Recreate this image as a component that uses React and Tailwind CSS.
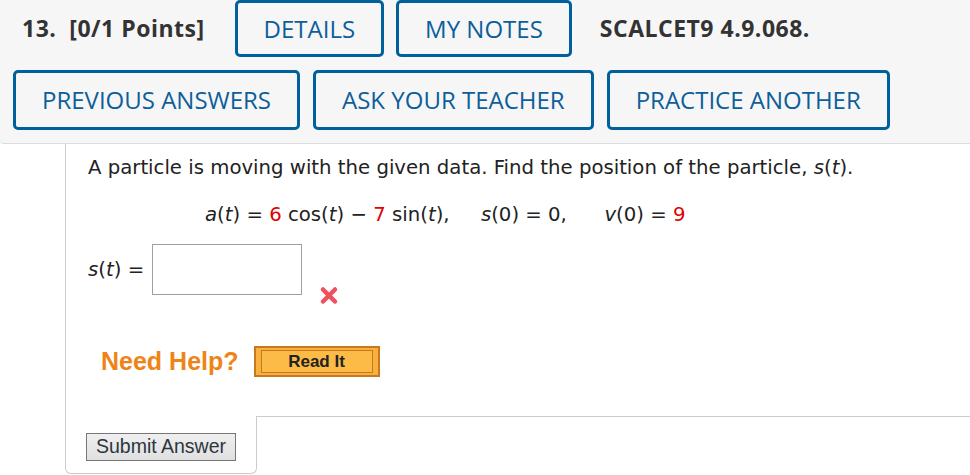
import React from "react";

function NavButton({ label, h }) {
  return (
    <button
      className={`${h} px-[26px] border-[3px] border-[#00609c] rounded-[5px] bg-[#f6f6f6] text-[#0d5e9a] text-[24px] leading-none whitespace-nowrap`}
    >
      {label}
    </button>
  );
}

function RedX() {
  return (
    <svg width="20" height="19" viewBox="0 0 20 19" className="self-end -mb-[10px] ml-[17px]">
      <path d="M4 3.5 L16 15.5 M16 3.5 L4 15.5" stroke="#f0505c" strokeWidth="4.5" strokeLinecap="round" />
    </svg>
  );
}

export default function App() {
  return (
    <div className="w-[970px] h-[475px] overflow-hidden bg-white">
      <div className="bg-[#f6f6f6] border-b border-[#dcdcdc] rounded-bl-[4px] pl-[13px] pb-[13px] font-['Open_Sans',sans-serif]">
        <div className="flex items-center h-[57px]">
          <span className="ml-[9px] mr-[30px] text-[23px] tracking-[0.5px] font-bold text-[#333] whitespace-pre">13.  [0/1 Points]</span>
          <div className="flex gap-[12px] self-stretch">
            <NavButton label="DETAILS" h="h-[57px]" />
            <NavButton label="MY NOTES" h="h-[57px]" />
          </div>
          <span className="ml-[28px] text-[23px] tracking-[0.5px] font-bold text-[#333]">SCALCET9 4.9.068.</span>
        </div>
        <div className="flex gap-[13px] mt-[13px]">
          <NavButton label="PREVIOUS ANSWERS" h="h-[60px]" />
          <NavButton label="ASK YOUR TEACHER" h="h-[60px]" />
          <NavButton label="PRACTICE ANOTHER" h="h-[60px]" />
        </div>
      </div>

      <div className="pl-[65px] font-['DejaVu_Sans',sans-serif] text-[#222]">
        <div className="border-l border-[#cccccc] pl-[22px] pt-[12px] pb-[35px]">
          <p className="text-[19.7px] leading-[24px]">
            A particle is moving with the given data. Find the position of the particle, <i>s</i>(<i>t</i>).
          </p>
          <p className="text-[19.7px] leading-[24px] mt-[23px] pl-[117px] whitespace-pre">
            <i>a</i>(<i>t</i>) = <span className="text-[#e00000]">6</span> cos(<i>t</i>) − <span className="text-[#e00000]">7</span> sin(<i>t</i>),     <i>s</i>(0) = 0,      <i>v</i>(0) = <span className="text-[#e00000]">9</span>
          </p>
          <div className="flex items-center mt-[17px]">
            <span className="text-[19.7px] leading-[24px] mr-[8px]"><i>s</i>(<i>t</i>) =</span>
            <div className="w-[150px] h-[51px] border border-[#a0a0a0] bg-white" />
            <RedX />
          </div>
          <div className="flex items-center mt-[48px] pl-[13px] font-['Liberation_Sans',sans-serif]">
            <span className="text-[25px] font-bold text-[#ee8417] mr-[15px]">Need Help?</span>
            <button className="h-[31px] w-[126px] border-2 border-[#c8791f] bg-[#f9b03c] px-[5px] py-[2px]">
              <span className="flex items-center justify-center h-full border border-[#c07a28] bg-[#fcbb47] text-[17px] font-bold text-[#222]">Read It</span>
            </button>
          </div>
        </div>
        <div className="flex">
          <div className="w-[192px] h-[58px] border-l border-b border-r border-[#cccccc] rounded-b-[6px] pl-[20px] pt-[17px]">
            <button className="w-[150px] h-[28px] border border-[#777] bg-gradient-to-b from-[#efefef] to-[#e0e0e0] font-['Liberation_Sans',sans-serif] text-[19.5px] leading-none text-[#2d3640]">
              Submit Answer
            </button>
          </div>
          <div className="flex-1 h-[60px] border-t border-[#cccccc]" />
        </div>
      </div>
    </div>
  );
}
